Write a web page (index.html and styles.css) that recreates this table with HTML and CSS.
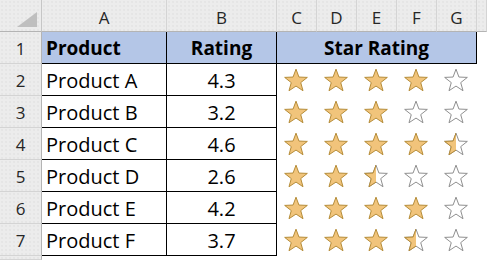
FILE: index.html
```html
<!DOCTYPE html>
<html lang="en">
<head>
  <meta charset="UTF-8" />
  <title>Star Rating</title>
  <link rel="stylesheet" href="styles.css">
</head>
<body>

<svg class="defs" width="0" height="0">
  <defs>
    <path id="star" d="M12 2 L14.7 9.28 L22.46 9.6 L16.37 14.42 L18.47 21.9 L12 17.6 L5.53 21.9 L7.63 14.42 L1.54 9.6 L9.3 9.28 Z" />
    <clipPath id="left-half"><rect x="0" y="0" width="12" height="24" /></clipPath>
  </defs>
</svg>

<div class="sheet" id="sheet">
  <div class="corner"><span class="tri"></span></div>
  <div class="col-head">A</div>
  <div class="col-head">B</div>
  <div class="col-head">C</div>
  <div class="col-head">D</div>
  <div class="col-head">E</div>
  <div class="col-head">F</div>
  <div class="col-head">G</div>
  <div class="col-head"></div>

  <div class="row-head">1</div>
  <div class="cell title boxed">Product</div>
  <div class="cell title boxed center">Rating</div>
  <div class="cell title boxed center merged">Star Rating</div>
  <div class="cell"></div>
</div>

<script>
  const products = [
    ['Product A', 4.3],
    ['Product B', 3.2],
    ['Product C', 4.6],
    ['Product D', 2.6],
    ['Product E', 4.2],
    ['Product F', 3.7]
  ];

  const sheet = document.getElementById('sheet');

  function cell(cls, html) {
    const div = document.createElement('div');
    div.className = cls;
    div.innerHTML = html;
    sheet.appendChild(div);
  }

  function star(kind) {
    let inner = '';
    if (kind === 'full') {
      inner = '<use href="#star" class="full" />';
    } else if (kind === 'half') {
      inner = '<use href="#star" class="empty" /><use href="#star" class="full" clip-path="url(#left-half)" />';
    } else {
      inner = '<use href="#star" class="empty" />';
    }
    return '<svg class="star" viewBox="0 0 24 24">' + inner + '</svg>';
  }

  products.forEach(function (p, i) {
    // icon set rule: full when >= n, half when >= n - 0.5
    const stepped = Math.floor(p[1] * 2) / 2;
    cell('row-head', i + 2);
    cell('cell boxed', p[0]);
    cell('cell boxed center', p[1].toFixed(1));
    for (let s = 1; s <= 5; s++) {
      let kind = 'empty';
      if (stepped >= s) kind = 'full';
      else if (stepped >= s - 0.5) kind = 'half';
      cell('cell star-cell', star(kind));
    }
    cell('cell', '');
  });

  cell('row-head', '');
  for (let c = 0; c < 8; c++) cell('cell', '');
</script>

</body>
</html>
```

FILE: styles.css
```css
body {
  margin: 0;
  background: #fff;
  font-family: 'Open Sans', 'Liberation Sans', sans-serif;
  color: #000;
}
.defs {
  position: absolute;
}
.sheet {
  display: grid;
  grid-template-columns: 42px 125px 110px repeat(5, 40px) 1fr;
  grid-template-rows: 32px repeat(7, 32px) 1fr;
  width: 487px;
  height: 260px;
  overflow: hidden;
}
.corner,
.col-head,
.row-head {
  background-color: #ececec;
  background-image: radial-gradient(#dcdcdc 0.6px, transparent 0.8px);
  background-size: 4px 4px;
  color: #262626;
  font-size: 17px;
}
.corner {
  position: relative;
  border-right: 1px solid #c6c6c6;
  border-bottom: 1px solid #b4b4b4;
}
.tri {
  position: absolute;
  right: 4px;
  bottom: 4px;
  width: 0;
  height: 0;
  border-left: 20px solid transparent;
  border-bottom: 15px solid #bfbfbf;
}
.col-head {
  display: flex;
  align-items: flex-end;
  justify-content: center;
  padding-bottom: 2px;
  border-right: 1px solid #d4d4d4;
  border-bottom: 1px solid #b4b4b4;
}
.row-head {
  display: flex;
  align-items: center;
  justify-content: center;
  padding-top: 1px;
  border-right: 1px solid #b4b4b4;
  border-bottom: 1px solid #d4d4d4;
}
.cell {
  display: flex;
  align-items: center;
  padding: 1px 0 0 4px;
  font-size: 20px;
  white-space: nowrap;
}
.boxed {
  border-right: 1px solid #000;
  border-bottom: 1px solid #000;
}
.center {
  justify-content: center;
  padding-left: 0;
}
.title {
  background: #b4c6e7;
  font-weight: bold;
  font-size: 19px;
}
.merged {
  grid-column: span 5;
}
.star-cell {
  justify-content: center;
  padding: 0 3px 0 0;
}
.star {
  width: 26px;
  height: 26px;
}
.star .full {
  fill: #f1c47b;
  stroke: #b38a35;
  stroke-width: 0.9;
}
.star .empty {
  fill: #fff;
  stroke: #8c8c8c;
  stroke-width: 0.9;
}
```
